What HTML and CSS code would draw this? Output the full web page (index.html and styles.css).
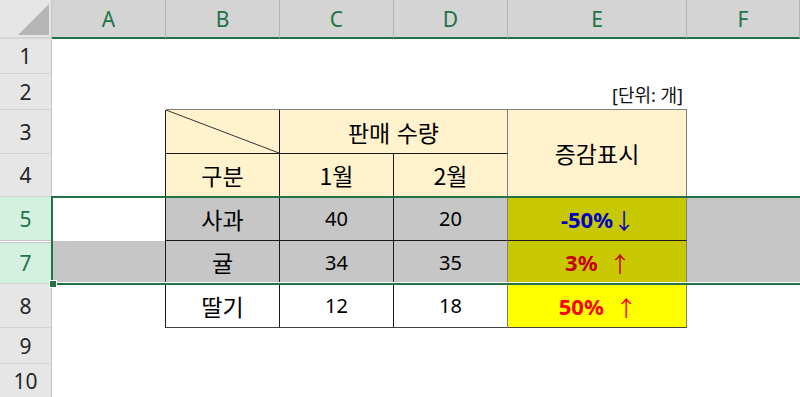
FILE: index.html
```html
<!DOCTYPE html>
<html lang="ko">
<head>
<meta charset="utf-8">
<title>판매 수량</title>
<link rel="stylesheet" href="styles.css">
</head>
<body>
<div class="sheet">
  <!-- column headers -->
  <div class="corner"><svg class="corner-tri" viewBox="0 0 51 37" width="51" height="37"><polygon points="18,35 49,35 49,4" fill="#b6b6b6"/></svg></div>
  <div class="ch">A</div>
  <div class="ch">B</div>
  <div class="ch">C</div>
  <div class="ch">D</div>
  <div class="ch">E</div>
  <div class="ch">F</div>

  <!-- row 1 -->
  <div class="rh">1</div>
  <div class="c span6"></div>

  <!-- row 2 -->
  <div class="rh">2</div>
  <div class="c"></div>
  <div class="c bt"></div>
  <div class="c bt"></div>
  <div class="c bt"></div>
  <div class="c bt unit">[단위: 개]</div>
  <div class="c"></div>

  <!-- row 3 -->
  <div class="rh">3</div>
  <div class="c br"></div>
  <div class="c gold br bb diag"><svg class="diag-line" viewBox="0 0 113 43" preserveAspectRatio="none"><line x1="0" y1="0" x2="113" y2="43" stroke="#333" stroke-width="1"/></svg></div>
  <div class="c gold brg bb ko span2">판매 수량</div>
  <div class="c gold brg bb ko rspan2">증감표시</div>
  <div class="c"></div>

  <!-- row 4 -->
  <div class="rh">4</div>
  <div class="c br"></div>
  <div class="c gold br bb ko">구분</div>
  <div class="c gold br bb ko">1월</div>
  <div class="c gold brg bb ko">2월</div>
  <div class="c"></div>

  <!-- row 5 -->
  <div class="rh sel r5">5</div>
  <div class="c br"></div>
  <div class="c gray br bb ko">사과</div>
  <div class="c gray br bb num">40</div>
  <div class="c gray brg bb num">20</div>
  <div class="c olive brg bb pct blue">-50%<span class="arrow">↓</span></div>
  <div class="c gray"></div>

  <!-- row 7 -->
  <div class="rh sel r7">7</div>
  <div class="c gray br"></div>
  <div class="c gray br bb ko">귤</div>
  <div class="c gray br bb num">34</div>
  <div class="c gray brg bb num">35</div>
  <div class="c olive brg bb pct dred">3%&nbsp;&nbsp;<span class="arrow">↑</span></div>
  <div class="c gray"></div>

  <!-- row 8 -->
  <div class="rh">8</div>
  <div class="c br"></div>
  <div class="c br bbd ko">딸기</div>
  <div class="c br bbd num">12</div>
  <div class="c brg bbd num">18</div>
  <div class="c yellow brg bbd pct red">50%&nbsp;&nbsp;<span class="arrow">↑</span></div>
  <div class="c"></div>

  <!-- row 9 -->
  <div class="rh">9</div>
  <div class="c span6"></div>

  <!-- row 10 -->
  <div class="rh">10</div>
  <div class="c span6"></div>

  <div class="selection"></div>
  <div class="handle"></div>
</div>
</body>
</html>
```

FILE: styles.css
```css
html, body {
  margin: 0;
  padding: 0;
  background: #ffffff;
  overflow: hidden;
}

.sheet {
  position: relative;
  display: grid;
  grid-template-columns: 52px 114px 114px 114px 114px 179px 1fr;
  grid-template-rows: 39px 35px 36px 44px 43px 44px 43px 44px 36px 34px;
  width: 800px;
  height: 397px;
  overflow: hidden;
  font-family: "Noto Sans", "Noto Sans CJK KR", sans-serif;
  color: #000;
}

.sheet > div {
  box-sizing: border-box;
}

.corner {
  background: #e6e6e6;
  border-right: 1px solid #c6c6c6;
  border-bottom: 2px solid #d4d4d4;
}

.corner-tri {
  display: block;
}

.ch {
  background: #d4d4d4;
  border-right: 1px solid #b4b4b4;
  border-bottom: 2px solid #217346;
  color: #217346;
  font-size: 21px;
  display: flex;
  align-items: center;
  justify-content: center;
  padding-top: 1px;
}

.rh {
  background: #e6e6e6;
  border-right: 1px solid #c6c6c6;
  border-bottom: 1px solid #d0d0d0;
  color: #262626;
  font-size: 21px;
  display: flex;
  align-items: center;
  justify-content: center;
}

.rh.sel {
  background: #d3f0e0;
  color: #217346;
}

.rh.r5 {
  border-bottom: 1px solid #c3c3c3;
}

.rh.r7 {
  box-shadow: inset 0 1px 0 #ffffff, inset 0 2px 0 #c3c3c3;
  padding-top: 2px;
}

.c {
  display: flex;
  align-items: center;
  justify-content: center;
  background: #ffffff;
}

.span6 { grid-column: span 6; }
.span2 { grid-column: span 2; }
.rspan2 { grid-row: span 2; }

.bt { border-bottom: 1px solid #7f7f7f; }
.br { border-right: 1px solid #1a1a1a; }
.brg { border-right: 1px solid #7f7f7f; }
.bb { border-bottom: 1px solid #1a1a1a; }
.bbd { border-bottom: 1px solid #444444; }

.gold { background: #fff2cc; }
.gray { background: #c6c6c6; }
.olive { background: #c8c800; }
.yellow { background: #ffff00; }

.diag {
  align-items: stretch;
  justify-content: stretch;
}

.diag-line {
  display: block;
  width: 100%;
  height: 100%;
}

.ko {
  font-family: "Noto Sans CJK KR", sans-serif;
  font-size: 23px;
}

.num {
  font-size: 20px;
}

.pct {
  font-weight: bold;
  font-size: 22px;
  padding-left: 2px;
}

.arrow {
  font-family: "Noto Sans CJK KR", sans-serif;
  font-weight: normal;
}

.blue { color: #0000c0; }
.dred { color: #c60000; }
.red { color: #ff0000; }

.unit {
  justify-content: flex-end;
  align-items: flex-end;
  font-family: "Noto Sans", "Noto Sans CJK KR", sans-serif;
  font-size: 18px;
  color: #111;
  padding: 0 4px 2px 0;
  white-space: nowrap;
}

.selection {
  position: absolute;
  left: 51px;
  top: 196px;
  width: 760px;
  height: 89px;
  border: 2px solid #217346;
  box-sizing: border-box;
  box-shadow: inset 0 -1px 0 #ffffff;
  pointer-events: none;
}

.handle {
  position: absolute;
  left: 50px;
  top: 281px;
  width: 6px;
  height: 6px;
  background: #217346;
  box-shadow: 0 0 0 1px #ffffff;
}
```
